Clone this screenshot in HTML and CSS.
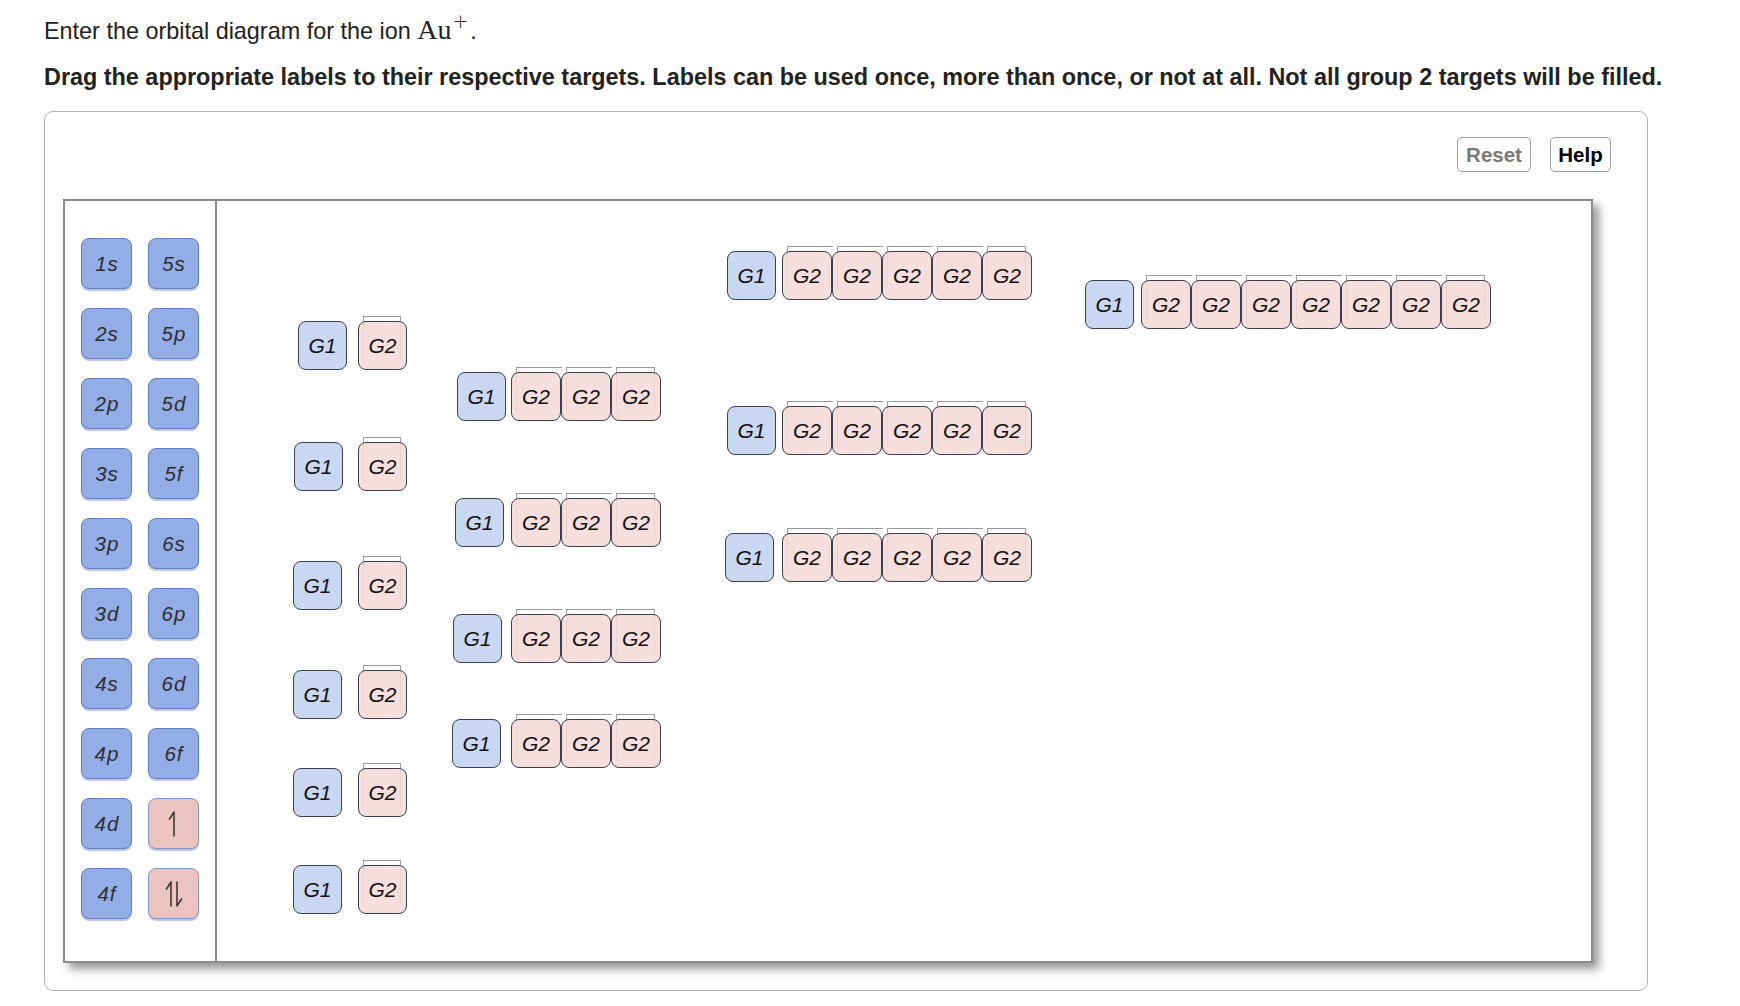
FILE: index.html
```html
<!DOCTYPE html>
<html lang="en">
<head>
<meta charset="utf-8">
<title>Orbital diagram</title>
<link rel="stylesheet" href="styles.css">
</head>
<body>
<div class="page">
  <p class="q-line">Enter the orbital diagram for the ion <span class="math">Au<sup>+</sup></span>.</p>
  <p class="q-instr">Drag the appropriate labels to their respective targets. Labels can be used once, more than once, or not at all. Not all group 2 targets will be filled.</p>

  <div class="panel">
    <div class="toolbar">
      <button class="btn btn-reset">Reset</button>
      <button class="btn btn-help">Help</button>
    </div>

    <div class="board">
      <div class="palette">
        <div class="lbl lbl-b">1<i>s</i></div><div class="lbl lbl-b">5<i>s</i></div>
        <div class="lbl lbl-b">2<i>s</i></div><div class="lbl lbl-b">5<i>p</i></div>
        <div class="lbl lbl-b">2<i>p</i></div><div class="lbl lbl-b">5<i>d</i></div>
        <div class="lbl lbl-b">3<i>s</i></div><div class="lbl lbl-b">5<i>f</i></div>
        <div class="lbl lbl-b">3<i>p</i></div><div class="lbl lbl-b">6<i>s</i></div>
        <div class="lbl lbl-b">3<i>d</i></div><div class="lbl lbl-b">6<i>p</i></div>
        <div class="lbl lbl-b">4<i>s</i></div><div class="lbl lbl-b">6<i>d</i></div>
        <div class="lbl lbl-b">4<i>p</i></div><div class="lbl lbl-b">6<i>f</i></div>
        <div class="lbl lbl-b">4<i>d</i></div>
        <div class="lbl lbl-r">
          <svg width="24" height="30" viewBox="0 0 24 30" aria-label="up arrow"><path d="M12 3 V27 M12 3 L7.5 10" fill="none" stroke="#333" stroke-width="1.5" stroke-linecap="round"/></svg>
        </div>
        <div class="lbl lbl-b">4<i>f</i></div>
        <div class="lbl lbl-r">
          <svg width="24" height="30" viewBox="0 0 24 30" aria-label="paired arrows"><path d="M9 3 V27 M9 3 L4.5 10 M15 3 V27 M15 27 L19.5 20" fill="none" stroke="#333" stroke-width="1.5" stroke-linecap="round"/></svg>
        </div>
      </div>

      <div class="canvas">
        <div class="col col-s">
          <div class="grp"><div class="g1">G1</div><div class="g2row"><div class="g2">G2</div></div></div>
          <div class="grp"><div class="g1">G1</div><div class="g2row"><div class="g2">G2</div></div></div>
          <div class="grp"><div class="g1">G1</div><div class="g2row"><div class="g2">G2</div></div></div>
          <div class="grp"><div class="g1">G1</div><div class="g2row"><div class="g2">G2</div></div></div>
          <div class="grp"><div class="g1">G1</div><div class="g2row"><div class="g2">G2</div></div></div>
          <div class="grp"><div class="g1">G1</div><div class="g2row"><div class="g2">G2</div></div></div>
        </div>
        <div class="col col-p">
          <div class="grp"><div class="g1">G1</div><div class="g2row"><div class="g2">G2</div><div class="g2">G2</div><div class="g2">G2</div></div></div>
          <div class="grp"><div class="g1">G1</div><div class="g2row"><div class="g2">G2</div><div class="g2">G2</div><div class="g2">G2</div></div></div>
          <div class="grp"><div class="g1">G1</div><div class="g2row"><div class="g2">G2</div><div class="g2">G2</div><div class="g2">G2</div></div></div>
          <div class="grp"><div class="g1">G1</div><div class="g2row"><div class="g2">G2</div><div class="g2">G2</div><div class="g2">G2</div></div></div>
        </div>
        <div class="col col-d">
          <div class="grp"><div class="g1">G1</div><div class="g2row"><div class="g2">G2</div><div class="g2">G2</div><div class="g2">G2</div><div class="g2">G2</div><div class="g2">G2</div></div></div>
          <div class="grp"><div class="g1">G1</div><div class="g2row"><div class="g2">G2</div><div class="g2">G2</div><div class="g2">G2</div><div class="g2">G2</div><div class="g2">G2</div></div></div>
          <div class="grp"><div class="g1">G1</div><div class="g2row"><div class="g2">G2</div><div class="g2">G2</div><div class="g2">G2</div><div class="g2">G2</div><div class="g2">G2</div></div></div>
        </div>
        <div class="col col-f">
          <div class="grp"><div class="g1">G1</div><div class="g2row"><div class="g2">G2</div><div class="g2">G2</div><div class="g2">G2</div><div class="g2">G2</div><div class="g2">G2</div><div class="g2">G2</div><div class="g2">G2</div></div></div>
        </div>
      </div>
    </div>
  </div>
</div>
</body>
</html>
```

FILE: styles.css
```css
* { box-sizing: border-box; }

html, body {
  margin: 0;
  padding: 0;
  background: #ffffff;
}

body {
  font-family: "Liberation Sans", Arial, "Helvetica Neue", sans-serif;
  color: #222222;
}

.page {
  padding: 18px 0 0 44px;
  width: 1740px;
}

.q-line {
  margin: 0;
  height: 26px;
  font-size: 23.4px;
  line-height: 26px;
  color: #222;
}

.math {
  font-family: "Liberation Serif", "DejaVu Serif", serif;
  font-size: 28px;
  line-height: 0;
}

.math sup {
  font-family: "DejaVu Sans", sans-serif;
  font-weight: 200;
  font-size: 19px;
  line-height: 0;
  vertical-align: 11px;
  margin-left: 1px;
  margin-right: 2px;
}

.q-instr {
  margin: 20px 0 0 0;
  font-size: 23.4px;
  line-height: 26px;
  font-weight: bold;
  color: #222;
}

.panel {
  margin-top: 21px;
  width: 1604px;
  height: 880px;
  border: 1px solid #b3b3b3;
  border-radius: 9px;
  padding: 25px 36px 0 18px;
}

.toolbar {
  display: flex;
  justify-content: flex-end;
  gap: 19px;
  height: 35px;
}

.btn {
  height: 35px;
  border: 1px solid #9c9c9c;
  border-radius: 5px;
  background: #ffffff;
  font-family: "Liberation Sans", Arial, sans-serif;
  font-weight: bold;
  font-size: 20.5px;
  padding: 0;
  line-height: 33px;
}

.btn-reset { width: 74px; color: #7a7a7a; }
.btn-help { width: 61px; color: #000000; }

.board {
  margin-top: 27px;
  width: 1530px;
  height: 764px;
  border: 2px solid #8c8c8c;
  display: flex;
  background: #ffffff;
  box-shadow: 6px 6px 9px rgba(0, 0, 0, 0.42);
}

.palette {
  width: 150px;
  flex: none;
  display: grid;
  grid-template-columns: 51px 51px;
  grid-auto-rows: 51px;
  column-gap: 16px;
  row-gap: 19px;
  padding: 37px 16px 0 16px;
  align-content: start;
}

.lbl {
  width: 51px;
  height: 51px;
  border-radius: 8px;
  border: 1px solid #5f7fc7;
  display: flex;
  align-items: center;
  justify-content: center;
  font-family: "Liberation Sans", Arial, sans-serif;
  font-style: italic;
  font-size: 20.5px;
  color: #2e2e2e;
  box-shadow: 0 2px 1px rgba(70, 90, 150, 0.35);
}

.lbl i { font-style: italic; margin-left: 1px; }

.lbl-b { background: #93ade7; }
.lbl-r { background: #ebc3bf; border-color: #7f96cf; }

.lbl svg { display: block; }

.canvas {
  flex: 1;
  position: relative;
  z-index: 0;
  border-left: 2px solid #8c8c8c;
  display: flex;
  align-items: flex-start;
}

.col {
  display: flex;
  flex-direction: column;
}

.grp {
  display: flex;
  align-items: flex-start;
  justify-content: space-between;
}

.g1, .g2 {
  height: 49px;
  border: 1.5px solid #3b3f52;
  border-radius: 8px;
  display: flex;
  align-items: center;
  justify-content: center;
  font-family: "Liberation Sans", Arial, sans-serif;
  font-style: italic;
  font-size: 21px;
  color: #111111;
}

.g1 {
  width: 49px;
  background: #c9d7f3;
}

.g2row {
  display: flex;
}

.g2 {
  width: 50px;
  position: relative;
  background: rgba(244, 218, 214, 0.88);
}

.g2::before {
  content: "";
  position: absolute;
  z-index: -1;
  top: -6px;
  left: 4px;
  right: -2px;
  height: 44px;
  border-top: 1.5px solid #999999;
  border-left: 1.5px solid #a3a3a3;
}

.g2:last-child::before {
  right: 5px;
  border-right: 1.5px solid #a3a3a3;
}

/* s-orbital column */
.col-s { width: 114px; margin-left: 76px; }
.col-s .g2 { width: 49px; }
.col-s .grp:nth-child(1) { margin-top: 120px; }
.col-s .grp:nth-child(2) { margin-top: 72px; }
.col-s .grp:nth-child(3) { margin-top: 70px; }
.col-s .grp:nth-child(4) { margin-top: 60px; }
.col-s .grp:nth-child(5) { margin-top: 49px; }
.col-s .grp:nth-child(6) { margin-top: 48px; }
.col-s .grp:nth-child(1) .g1 { margin-left: 5px; }
.col-s .grp:nth-child(2) .g1 { margin-left: 1px; }

/* p-orbital column */
.col-p { width: 209px; margin-left: 45px; }
.col-p .grp:nth-child(1) { margin-top: 171px; }
.col-p .grp:nth-child(2) { margin-top: 77px; }
.col-p .grp:nth-child(3) { margin-top: 67px; }
.col-p .grp:nth-child(4) { margin-top: 56px; }
.col-p .grp:nth-child(1) .g1 { margin-left: 5px; }
.col-p .grp:nth-child(2) .g1 { margin-left: 3px; }
.col-p .grp:nth-child(3) .g1 { margin-left: 1px; }

/* d-orbital column */
.col-d { width: 307px; margin-left: 64px; }
.col-d .grp:nth-child(1) { margin-top: 50px; }
.col-d .grp:nth-child(2) { margin-top: 106px; }
.col-d .grp:nth-child(3) { margin-top: 78px; }
.col-d .grp:nth-child(1) .g1,
.col-d .grp:nth-child(2) .g1 { margin-left: 2px; }

/* f-orbital column */
.col-f { width: 406px; margin-left: 53px; }
.col-f .grp:nth-child(1) { margin-top: 79px; }
```
